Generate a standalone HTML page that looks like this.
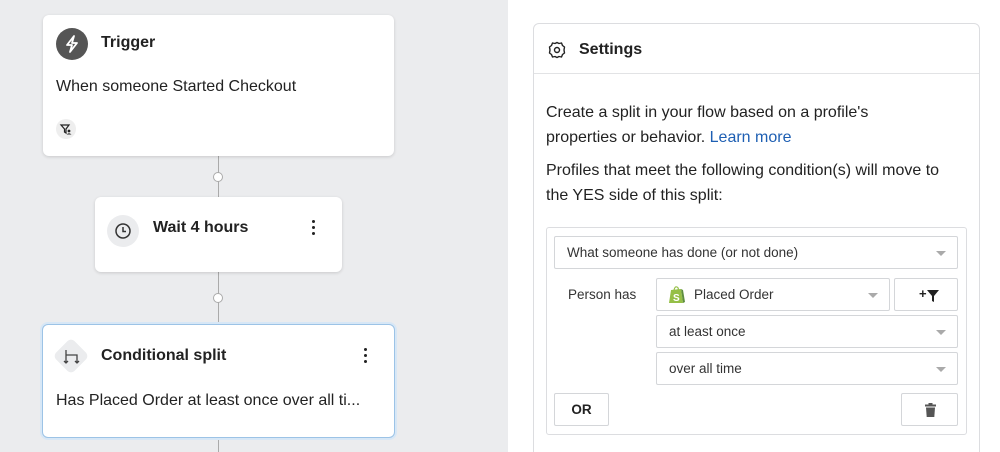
<!DOCTYPE html>
<html><head><style>
*{box-sizing:border-box;margin:0;padding:0}
html,body{width:1000px;height:452px;overflow:hidden}
body{font-family:"Liberation Sans",sans-serif;color:#222;position:relative;background:#fff}
.abs{position:absolute}
.card{position:absolute;background:#fff;border-radius:6px;box-shadow:0 1px 3px rgba(0,0,0,.15)}
.t{position:absolute;white-space:nowrap}
.sel{position:absolute;border:1px solid #d4d6d9;border-radius:2px;background:#fff;font-size:13.5px;color:#333;padding-left:12px;line-height:31px}
.sel:after{content:"";position:absolute;right:11px;top:14px;border-left:5px solid transparent;border-right:5px solid transparent;border-top:5px solid #aaa}
.btn{position:absolute;border:1px solid #d4d6d9;border-radius:2px;background:#fff}
.keb{position:absolute;width:3px}
.keb i{display:block;width:3px;height:3px;border-radius:50%;background:#222;margin-bottom:3px}
</style></head><body>
<div class="abs" style="left:0;top:0;width:508px;height:452px;background:#ebecee"></div>
<div class="abs" style="left:218px;top:156px;width:1px;height:296px;background:#aaa"></div>
<div class="abs" style="left:213px;top:172px;width:10px;height:10px;border-radius:50%;background:#fff;border:1px solid #aaa"></div>
<div class="abs" style="left:213px;top:293px;width:10px;height:10px;border-radius:50%;background:#fff;border:1px solid #aaa"></div>

<div class="card" style="left:43px;top:15px;width:351px;height:141px">
 <div class="abs" style="left:13px;top:13px;width:32px;height:32px;border-radius:50%;background:#555">
  <svg width="32" height="32" viewBox="0 0 32 32"><path d="M18 8 L11 17 H16 L14 24 L21 15 H16 Z" fill="none" stroke="#fff" stroke-width="1.8" stroke-linejoin="round"/></svg>
 </div>
 <div class="t" style="left:58px;top:19px;font-size:16px;font-weight:bold">Trigger</div>
 <div class="t" style="left:13px;top:63px;font-size:16px">When someone Started Checkout</div>
 <div class="abs" style="left:13px;top:104px;width:20px;height:20px;border-radius:50%;background:#eee">
  <svg width="20" height="20" viewBox="0 0 20 20"><path d="M5 6 H13 L10 10 V14 L8.5 13 V10 Z" fill="none" stroke="#222" stroke-width="1.2"/><circle cx="13" cy="12" r="1.4" fill="#222"/><path d="M10.5 15.5 Q13 13 15.5 15.5Z" fill="#222"/></svg>
 </div>
</div>

<div class="card" style="left:95px;top:197px;width:247px;height:75px">
 <div class="abs" style="left:12px;top:18px;width:32px;height:32px;border-radius:50%;background:#ebecee">
  <svg width="32" height="32" viewBox="0 0 32 32"><circle cx="16" cy="16" r="7" fill="none" stroke="#333" stroke-width="1.5"/><path d="M16 12 V16.5 H19" fill="none" stroke="#333" stroke-width="1.5"/></svg>
 </div>
 <div class="t" style="left:58px;top:22px;font-size:16px;font-weight:bold">Wait 4 hours</div>
 <div class="keb" style="left:217px;top:23px"><i></i><i></i><i></i></div>
</div>

<div class="card" style="left:42px;top:324px;width:353px;height:114px;border:1px solid #9cc3e6;box-shadow:0 0 0 2px #d7e7f6">
 <div class="abs" style="left:15px;top:18px;width:26px;height:26px;transform:rotate(45deg);background:#ebecee;border-radius:5px"></div>
 <svg class="abs" style="left:13px;top:16px" width="32" height="32" viewBox="0 0 32 32"><path d="M10 9 V14 H21 V22 M10 14 V22 M8 20 L10 22 L12 20 M19 20 L21 22 L23 20" fill="none" stroke="#444" stroke-width="1.3"/></svg>
 <div class="t" style="left:58px;top:22px;font-size:16px;font-weight:bold">Conditional split</div>
 <div class="keb" style="left:321px;top:23px"><i></i><i></i><i></i></div>
 <div class="t" style="left:13px;top:67px;font-size:16px">Has Placed Order at least once over all ti...</div>
</div>

<div class="abs" style="left:533px;top:23px;width:447px;height:440px;border:1px solid #dcdde0;border-radius:6px;background:#fff">
 <svg class="abs" style="left:13px;top:16px" width="20" height="20" viewBox="0 0 20 20"><path d="M10 2.5 L12 3.5 L14.5 3 L15.5 5.5 L17.5 7 L17 10 L17.5 13 L15.5 14.5 L14.5 17 L12 16.5 L10 17.5 L8 16.5 L5.5 17 L4.5 14.5 L2.5 13 L3 10 L2.5 7 L4.5 5.5 L5.5 3 L8 3.5 Z" fill="none" stroke="#222" stroke-width="1.4" stroke-linejoin="round"/><circle cx="10" cy="10" r="2.5" fill="none" stroke="#222" stroke-width="1.4"/></svg>
 <div class="t" style="left:45px;top:17px;font-size:16px;font-weight:bold">Settings</div>
 <div class="abs" style="left:0;top:49px;width:445px;height:1px;background:#e2e3e5"></div>
 <div class="abs" style="left:12px;top:76px;font-size:16px;line-height:25px;width:430px;color:#222">Create a split in your flow based on a profile's<br>properties or behavior. <span style="color:#1e5fb3">Learn more</span></div>
 <div class="abs" style="left:12px;top:134px;font-size:16px;line-height:25px;width:430px;color:#222">Profiles that meet the following condition(s) will move to<br>the YES side of this split:</div>
 <div class="abs" style="left:12px;top:203px;width:421px;height:208px;border:1px solid #dcdde0;border-radius:3px"></div>
</div>

<div class="sel" style="left:554px;top:236px;width:404px;height:33px">What someone has done (or not done)</div>
<div class="t" style="left:568px;top:287px;font-size:13.5px;color:#333">Person has</div>
<div class="sel" style="left:656px;top:278px;width:234px;height:33px;padding-left:37px">Placed Order</div>
<svg class="abs" style="left:668px;top:285px" width="18" height="20" viewBox="0 0 18 20"><path d="M3 5 L13 4 L15 18 L1 18 Z" fill="#95bf47"/><path d="M13 4 L15 18 L17 17 L15 5Z" fill="#5e8e3e"/><path d="M6 5 Q7 1 9 2 Q11 3 10 5" fill="none" stroke="#95bf47" stroke-width="1.2"/><text x="5" y="16" font-size="10" font-weight="bold" fill="#fff" font-family="Liberation Sans">S</text></svg>
<div class="btn" style="left:894px;top:278px;width:64px;height:33px"><span class="t" style="left:24px;top:7px;font-size:13px;font-weight:bold">+</span><svg class="abs" style="left:32px;top:11px" width="12" height="12" viewBox="0 0 12 12"><path d="M0 0 H12 L7 6 V12 L5 11 V6 Z" fill="#222"/></svg></div>
<div class="sel" style="left:656px;top:315px;width:302px;height:33px">at least once</div>
<div class="sel" style="left:656px;top:352px;width:302px;height:33px">over all time</div>
<div class="btn" style="left:554px;top:393px;width:55px;height:33px;font-size:13.5px;font-weight:bold;text-align:center;line-height:31px">OR</div>
<div class="btn" style="left:901px;top:393px;width:57px;height:33px"><svg class="abs" style="left:23px;top:9px" width="11" height="14" viewBox="0 0 11 14"><rect x="0" y="1.5" width="11" height="2" fill="#555"/><rect x="3.5" y="0" width="4" height="2" fill="#555"/><path d="M1 4.5 H10 L9.3 14 H1.7 Z" fill="#555"/></svg></div>
</body></html>
